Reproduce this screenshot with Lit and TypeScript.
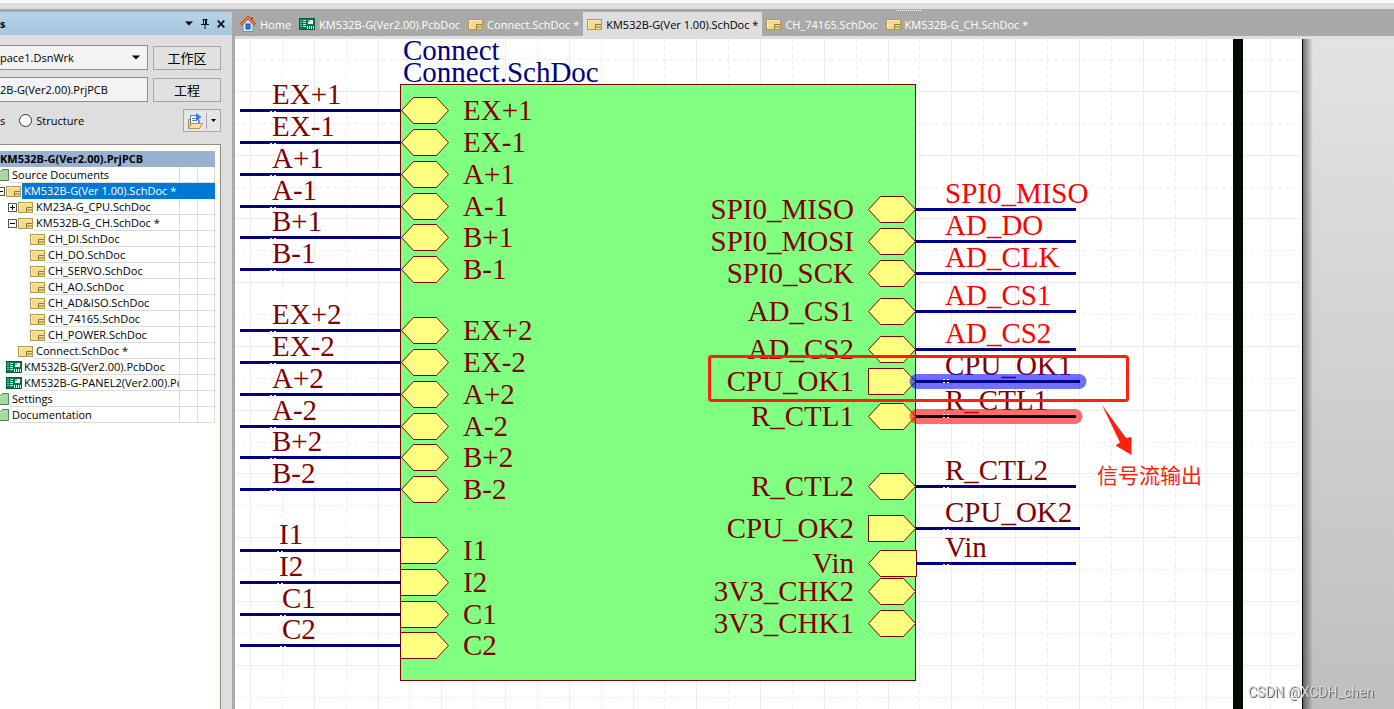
import { LitElement, html, svg, css, nothing } from "lit";
import { customElement, property, state } from "lit/decorators.js";

type IconName = "home" | "pcb" | "sch" | "folder";

const ICONS = {
  home: html`<svg width="16" height="16" viewBox="0 0 16 16" aria-hidden="true">
    <path d="M3 8v7.5h10V8L8 3z" fill="#dce9f8" stroke="#6f8fb5" />
    <path d="M11 1h2v4l-2-2z" fill="#c0502a" />
    <path d="M0.8 8.8 8 1.6l7.2 7.2" fill="none" stroke="#b5441c" stroke-width="3" />
    <path d="M1.2 8.4 8 1.8l6.8 6.6" fill="none" stroke="#f08a50" stroke-width="1.4" />
    <rect x="6" y="8" width="4" height="5" fill="#1f7df0" stroke="#0d55b8" />
  </svg>`,
  pcb: html`<svg width="16" height="12" viewBox="0 0 16 12" aria-hidden="true">
    <rect width="16" height="12" fill="#06794f" />
    <rect x="0.5" y="0.5" width="15" height="11" fill="none" stroke="#045a3a" />
    <path d="M1.5 2.5h1M1.5 4.5h1M1.5 6.5h1M1.5 8.5h1M4 2.5h3M4 4.5h3M4 6.5h3M4 8.5h3" stroke="#d8f2e4" />
    <rect x="9" y="2" width="5" height="4" fill="#e8f2ee" />
    <rect x="9" y="2" width="2" height="2" fill="#7fb8a0" />
    <path d="M8.5 8v3M10.5 8v3M12.5 8v3M14.5 8v3" stroke="#eafaf2" />
  </svg>`,
  sch: html`<svg width="15" height="11" viewBox="0 0 15 11" aria-hidden="true">
    <rect x="0.5" y="0.5" width="14" height="10" fill="#f3dc8c" stroke="#ae9852" />
    <path d="M1.5 9V1.5h12" fill="none" stroke="#faecb8" />
    <path d="M8.5 10V5.5H14M8.5 8H14" fill="none" stroke="#8e7a3e" />
  </svg>`,
  folder: html`<svg width="15" height="12" viewBox="0 0 15 12" aria-hidden="true">
    <path d="M0.5 11.5v-9h6l2-2h6v11z" fill="#a4d8a0" stroke="#4f8a58" />
    <path d="M1.5 3.5h6l2-1" fill="none" stroke="#c8ecc4" />
  </svg>`,
};

interface TreeRow {
  label: string;
  depth: number;
  icon: IconName;
  toggle?: "+" | "-";
}

const TREE: TreeRow[] = [
  { label: "Source Documents", depth: 0, icon: "folder" },
  { label: "KM532B-G(Ver 1.00).SchDoc *", depth: 1, icon: "sch", toggle: "-" },
  { label: "KM23A-G_CPU.SchDoc", depth: 2, icon: "sch", toggle: "+" },
  { label: "KM532B-G_CH.SchDoc *", depth: 2, icon: "sch", toggle: "-" },
  { label: "CH_DI.SchDoc", depth: 3, icon: "sch" },
  { label: "CH_DO.SchDoc", depth: 3, icon: "sch" },
  { label: "CH_SERVO.SchDoc", depth: 3, icon: "sch" },
  { label: "CH_AO.SchDoc", depth: 3, icon: "sch" },
  { label: "CH_AD&ISO.SchDoc", depth: 3, icon: "sch" },
  { label: "CH_74165.SchDoc", depth: 3, icon: "sch" },
  { label: "CH_POWER.SchDoc", depth: 3, icon: "sch" },
  { label: "Connect.SchDoc *", depth: 2, icon: "sch" },
  { label: "KM532B-G(Ver2.00).PcbDoc", depth: 1, icon: "pcb" },
  { label: "KM532B-G-PANEL2(Ver2.00).PcbDoc", depth: 1, icon: "pcb" },
  { label: "Settings", depth: 0, icon: "folder" },
  { label: "Documentation", depth: 0, icon: "folder" },
];

@customElement("projects-panel")
class ProjectsPanel extends LitElement {
  @state() selected = 1;

  static styles = css`
    :host {
      display: flex;
      flex-direction: column;
      background: #dedede;
      color: #000;
      overflow: hidden;
    }
    button, input, select {
      font: inherit;
      color: inherit;
      margin: 0;
      padding: 0;
      border-radius: 0;
    }
    .title {
      display: flex;
      align-items: center;
      justify-content: space-between;
      height: 23px;
      flex: none;
      background: linear-gradient(#b8d3e8, #a3c6de);
      font-weight: bold;
    }
    .title h2 { margin: 0; font-size: 11px; }
    .title button {
      display: flex;
      align-items: center;
      justify-content: center;
      width: 16px;
      height: 16px;
      border: 0;
      background: none;
    }
    .tools { padding-right: 3px; display: flex; }
    .form {
      display: grid;
      grid-template-columns: 1fr 68px;
      column-gap: 5px;
      row-gap: 7px;
      align-items: center;
      padding: 10px 11px 12px 0;
      flex: none;
    }
    .field {
      display: flex;
      align-items: center;
      box-sizing: border-box;
      height: 25px;
      border: 1px solid #8e8e8e;
      border-left: 0;
      background: #f3f3f3;
      min-width: 0;
      position: relative;
    }
    .field select, .field input {
      appearance: none;
      border: 0;
      background: none;
      outline: 0;
      width: 100%;
      height: 23px;
    }
    .field svg { position: absolute; right: 7px; pointer-events: none; }
    .push {
      height: 24px;
      border: 1px solid #a6a6a6;
      background: #e1e1e1;
      font-size: 13px;
      font-family: "Noto Sans CJK SC", sans-serif;
      line-height: 20px;
    }
    .modes { display: flex; align-items: center; gap: 14px; }
    .modes label { display: flex; align-items: center; gap: 4px; }
    .modes input {
      appearance: none;
      box-sizing: border-box;
      width: 13px;
      height: 13px;
      border: 1px solid #333;
      border-radius: 50%;
      background: #fff;
    }
    .split {
      justify-self: end;
      display: flex;
      align-items: center;
      box-sizing: border-box;
      width: 38px;
      height: 23px;
      border: 1px solid #a6a6a6;
      background: #e6e6e6;
    }
    .split button {
      display: flex;
      align-items: center;
      justify-content: center;
      border: 0;
      background: none;
      height: 16px;
    }
    .split .open { width: 22px; }
    .split .more { width: 14px; border-left: 1px solid #a6a6a6; }
    .tree {
      flex: 1;
      margin-right: 11px;
      border: 1px solid #8e8e8e;
      border-width: 1px 1px 0 0;
      background: linear-gradient(#fffaf0, #fffaf0) right / 5px 100% no-repeat, linear-gradient(#fffaf0, #fffaf0) top / 100% 5px no-repeat, #fff;
      padding: 6px 5px 0 0;
      overflow: hidden;
    }
    .project {
      margin: 0;
      height: 16px;
      line-height: 16px;
      font-size: 11px;
      background: #99b2cf;
      font-weight: bold;
    }
    ul { list-style: none; margin: 0 0 0 -18px; padding: 0; }
    li {
      display: grid;
      grid-template-columns: 1fr 18px 17px;
      height: 16px;
      line-height: 15px;
    }
    .name { display: flex; min-width: 0; }
    .toggle {
      flex: none;
      display: flex;
      align-items: center;
      justify-content: center;
      width: 12px;
      height: 16px;
      border: 0;
      background: none;
    }
    .icon { flex: none; width: 16px; display: flex; align-items: center; }
    .label, .cell {
      box-sizing: border-box;
      border-bottom: 1px solid #dcdcdc;
      border-right: 1px solid #dcdcdc;
      white-space: nowrap;
      overflow: hidden;
    }
    .label { flex: 1; padding-left: 2px; }
    .on .label, .on .cell { background: #0078d7; border-color: #0078d7; color: #fff; }
  `;

  render() {
    const arrow = html`<svg width="8" height="5" viewBox="0 0 8 5" aria-hidden="true"><path d="M0 0.5h8L4 4.5z" fill="#000" /></svg>`;
    return html`
      <header class="title">
        <h2>s</h2>
        <div class="tools">
          <button aria-label="Menu">${arrow}</button>
          <button aria-label="Pin">
            <svg width="8" height="10" viewBox="0 0 8 10" aria-hidden="true">
              <path d="M1.5 0.5h5M2.5 0v5.5M5.5 0v5.5M0 5.5h8M4 6v4" fill="none" stroke="#111" />
              <path d="M5 1v4" stroke="#111" stroke-width="2" />
            </svg>
          </button>
          <button aria-label="Close">
            <svg width="8" height="8" viewBox="0 0 8 8" aria-hidden="true"><path d="M0.7 0.7l6.6 6.6M7.3 0.7l-6.6 6.6" stroke="#111" stroke-width="1.8" /></svg>
          </button>
        </div>
      </header>
      <div class="form">
        <div class="field">
          <select aria-label="Workspace"><option>pace1.DsnWrk</option></select>
          ${arrow}
        </div>
        <button class="push">工作区</button>
        <div class="field"><input aria-label="Project" value="2B-G(Ver2.00).PrjPCB" /></div>
        <button class="push">工程</button>
        <div class="modes">
          <span>s</span>
          <label><input type="radio" name="mode" />Structure</label>
        </div>
        <div class="split">
          <button class="open" aria-label="Open">
            <svg width="16" height="16" viewBox="0 0 16 16" aria-hidden="true">
              <path d="M1.5 15V6.5h4l1 1h6V15z" fill="#f4d9a0" stroke="#b98d45" />
              <rect x="3.5" y="2.5" width="8" height="9" fill="#eef4fb" stroke="#5d83b5" />
              <path d="M5 5.5h4M5 7.5h5" stroke="#5d83b5" />
              <path d="M9 0l5.5 4L9 8z" fill="#2f7df0" />
              <path d="M1.5 15.500l3-5h11l-3 5z" fill="#fbe3ae" stroke="#b98d45" />
            </svg>
          </button>
          <button class="more" aria-label="More">
            <svg width="5" height="3" viewBox="0 0 5 3" aria-hidden="true"><path d="M0 0h5L2.5 3z" /></svg>
          </button>
        </div>
      </div>
      <div class="tree">
        <h3 class="project">KM532B-G(Ver2.00).PrjPCB</h3>
        <ul role="tree">
          ${TREE.map(
            (row, i) => html`<li role="treeitem" aria-selected=${i === this.selected} class=${i === this.selected ? "on" : ""} @click=${() => (this.selected = i)}>
              <div class="name" style="padding-left:${row.depth * 12}px">
                ${row.toggle
                  ? html`<button class="toggle" aria-label="Toggle">
                      <svg width="9" height="9" viewBox="0 0 9 9" aria-hidden="true">
                        <rect x="0.5" y="0.5" width="8" height="8" fill="#fff" stroke="#555" />
                        <path d="M2 4.5h5" stroke="#000" />
                        ${row.toggle === "+" ? svg`<path d="M4.5 2v5" stroke="#000" />` : nothing}
                      </svg>
                    </button>`
                  : html`<span class="toggle"></span>`}
                <span class="icon">${ICONS[row.icon]}</span>
                <span class="label">${row.label}</span>
              </div>
              <span class="cell"></span><span class="cell"></span>
            </li>`
          )}
        </ul>
      </div>
    `;
  }
}

@customElement("document-tabs")
class DocumentTabs extends LitElement {
  @property({ type: Number }) active = 3;

  static styles = css`
    :host {
      display: flex;
      height: 27px;
      flex: none;
      background: #a9a9a9;
      border-bottom: 3px solid #dedede;
      padding-left: 1px;
      align-items: flex-end;
      position: relative;
    }
    button {
      display: flex;
      align-items: center;
      gap: 4px;
      height: 24px;
      padding: 0 4px;
      border: 0;
      background: none;
      color: #fff;
      font: inherit;
      white-space: nowrap;
    }
    button.active { background: #dedede; color: #000; }
    .grip {
      position: absolute;
      top: 1px;
      left: 57%;
      width: 25px;
      height: 1px;
      background: repeating-linear-gradient(90deg, #fff 0 1px, transparent 1px 2px);
    }
  `;

  render() {
    const tabs: [IconName, string][] = [
      ["home", "Home"],
      ["pcb", "KM532B-G(Ver2.00).PcbDoc"],
      ["sch", "Connect.SchDoc *"],
      ["sch", "KM532B-G(Ver 1.00).SchDoc *"],
      ["sch", "CH_74165.SchDoc"],
      ["sch", "KM532B-G_CH.SchDoc *"],
    ];
    return html`${tabs.map(
        ([icon, label], i) => html`<button class=${i === this.active ? "active" : ""} @click=${() => (this.active = i)}>${ICONS[icon]}<span>${label}</span></button>`
      )}<span class="grip"></span>`;
  }
}

/* Schematic data: y is the centre line of the sheet entry and its wire. */
type Shape = "both" | "right" | "left";

interface LeftEntry { y: number; name: string; x: number; shape: Shape; }
interface RightEntry { y: number; name: string; shape: Shape; net?: string; red?: boolean; end?: number; wire?: string; }

const LEFT: LeftEntry[] = [
  ...([[110, "EX+1"], [142, "EX-1"], [174, "A+1"], [206, "A-1"], [237, "B+1"], [269, "B-1"],
    [330, "EX+2"], [362, "EX-2"], [394, "A+2"], [426, "A-2"], [457, "B+2"], [489, "B-2"]] as [number, string][])
    .map(([y, name]) => ({ y, name, x: 272, shape: "both" as Shape })),
  { y: 550, name: "I1", x: 279, shape: "right" },
  { y: 582, name: "I2", x: 279, shape: "right" },
  { y: 614, name: "C1", x: 282, shape: "right" },
  { y: 645, name: "C2", x: 282, shape: "right" },
];

const RIGHT: RightEntry[] = [
  { y: 209, name: "SPI0_MISO", shape: "both", net: "SPI0_MISO", red: true },
  { y: 241, name: "SPI0_MOSI", shape: "both", net: "AD_DO", red: true },
  { y: 273, name: "SPI0_SCK", shape: "both", net: "AD_CLK", red: true },
  { y: 311, name: "AD_CS1", shape: "both", net: "AD_CS1", red: true },
  { y: 349, name: "AD_CS2", shape: "both", net: "AD_CS2", red: true },
  { y: 381, name: "CPU_OK1", shape: "right", net: "CPU_OK1", end: 1080 },
  { y: 416, name: "R_CTL1", shape: "both", net: "R_CTL1", wire: "#000" },
  { y: 486, name: "R_CTL2", shape: "both", net: "R_CTL2" },
  { y: 528, name: "CPU_OK2", shape: "right", net: "CPU_OK2", end: 1080 },
  { y: 563, name: "Vin", shape: "left", net: "Vin" },
  { y: 591, name: "3V3_CHK2", shape: "both" },
  { y: 623, name: "3V3_CHK1", shape: "both" },
];

const portPath = (x0: number, x1: number, y: number, shape: Shape) => {
  const c = y + 0.5;
  const t = c - 13;
  const b = c + 13;
  const left = shape === "right" ? `M${x0} ${b}V${t}` : `M${x0 + 12} ${b}L${x0} ${c}L${x0 + 12} ${t}`;
  const right = shape === "left" ? `H${x1}V${b}` : `H${x1 - 12}L${x1} ${c}L${x1 - 12} ${b}`;
  return left + right + "Z";
};

@customElement("schematic-sheet")
class SchematicSheet extends LitElement {
  static styles = css`
    :host { display: block; background: linear-gradient(#e3e3e3, #bfbfbf); overflow: hidden; }
    .canvas { display: block; width: 100%; height: 100%; }
    text { font-family: "Liberation Serif", serif; font-size: 29px; fill: #800000; }
    .title { fill: #000080; }
    .red { fill: #ff0000; }
    .end { text-anchor: end; }
    .note { font-family: "Noto Sans CJK SC", sans-serif; font-size: 21px; fill: #ff2010; }
    .mark { font-family: Roboto, sans-serif; font-size: 14px; fill: #d9d9d9; filter: drop-shadow(1px 1px 0 #666); }
    .grid { stroke: #ecece8; fill: none; }
    .dash { stroke-dasharray: 4 3; }
    .port { fill: #ffff80; stroke: #800000; }
    .wire { stroke: #000080; stroke-width: 3; }
    .glow { stroke-width: 15; stroke-linecap: round; stroke-opacity: 0.57; }
    .callout { fill: none; stroke: #ff2010; stroke-width: 3; }
  `;

  private grid() {
    const out = [];
    for (let i = 0; i < 34; i++) {
      const x = Math.round(250 + i * 31.88) + 0.5;
      if (x < 1300) out.push(svg`<path class="grid ${i % 2 ? "dash" : ""}" d="M${x} 39V1400" />`);
    }
    for (let i = 0; i < 42; i++) {
      const y = Math.round(59 + i * 31.88) + 0.5;
      out.push(svg`<path class="grid ${i % 2 ? "" : "dash"}" d="M235 ${y}H1300" />`);
    }
    return out;
  }

  private anchor(x: number, y: number) {
    return svg`<path d="M${x - 2} ${y + 1.5}h2m2 0h2" stroke="#fff" />`;
  }

  render() {
    return html`<svg class="canvas" role="img" aria-label="Schematic">
      <defs>
        <linearGradient id="shade"><stop offset="0" stop-color="#000" stop-opacity="0.5" /><stop offset="1" stop-color="#000" stop-opacity="0" /></linearGradient>
      </defs>
      <g transform="translate(-235 -39)">
        <rect x="235" y="39" width="1067" height="1400" fill="#fff" />
        ${this.grid()}
        <rect x="1233" y="39" width="10" height="1400" fill="#040b02" />
        <rect x="1302" y="39" width="1" height="1400" fill="#000" />
        <rect x="1303" y="39" width="10" height="1400" fill="url(#shade)" />

        <rect x="400.5" y="84.5" width="515" height="596" fill="#80ff80" stroke="#800000" />
        <text class="title" x="403" y="60">Connect</text>
        <text class="title" x="403" y="82">Connect.SchDoc</text>

        ${LEFT.map((e) => svg`
          <text x=${e.x} y=${e.y - 6}>${e.name}</text>
          <text x="463" y=${e.y + 10}>${e.name}</text>
          <path class="port" d=${portPath(e.shape === "both" ? 401.5 : 400.5, 448.5, e.y, e.shape)} />
          <path class="wire" d="M240 ${e.y + 0.5}H401" />
          ${this.anchor(e.x, e.y)}`)}

        ${RIGHT.map((e) => svg`
          <text class="end" x="854" y=${e.y + 10}>${e.name}</text>
          <path class="port" d=${portPath(868.5, e.shape === "left" ? 916.5 : 915.5, e.y, e.shape)} />
          ${e.net ? svg`<text class=${e.red ? "red" : ""} x="945" y=${e.y - 6}>${e.net}</text>` : nothing}`)}

        <path class="glow" d="M917 381.5H1079" stroke="#0000ff" />
        <path class="glow" d="M917 416.5H1075" stroke="#ff0000" />
        ${RIGHT.filter((e) => e.net).map((e) => svg`
          <path class="wire" style=${e.wire ? `stroke:${e.wire}` : ""} d="M916 ${e.y + 0.5}H${e.end ?? 1076}" />
          ${e.red ? nothing : this.anchor(945, e.y)}
          ${e.y === 381 || e.y === 416 ? this.anchor(945, e.y - 3) : nothing}`)}

        <rect class="callout" x="709.5" y="356.5" width="418" height="44" rx="2" />
        <path d="M1102 405l24 33 5.5-1v18l-16-9.5 4.500-3z" fill="#ff2010" />
        <text class="note" x="1097" y="483">信号流输出</text>
        <text class="mark" x="1248" y="697">CSDN @XCDH_chen</text>
      </g>
    </svg>`;
  }
}

@customElement("app-root")
class AppRoot extends LitElement {
  static styles = css`
    :host {
      display: grid;
      grid-template-columns: 232px 1fr;
      grid-template-rows: 9px 1fr;
      column-gap: 3px;
      height: 100vh;
      background: #a9a9a9;
      font-family: "Open Sans", "Noto Sans", sans-serif;
      font-size: 11px;
      overflow: hidden;
    }
    .top {
      grid-column: 1 / -1;
      background: linear-gradient(#f7f7f7 0 2px, #fff 2px 3px, #dedede 3px);
    }
    projects-panel { margin-top: 3px; min-height: 0; }
    main { display: flex; flex-direction: column; min-width: 0; min-height: 0; }
    schematic-sheet { flex: 1; min-height: 0; }
  `;

  render() {
    return html`
      <div class="top"></div>
      <projects-panel></projects-panel>
      <main>
        <document-tabs></document-tabs>
        <schematic-sheet></schematic-sheet>
      </main>
    `;
  }
}
